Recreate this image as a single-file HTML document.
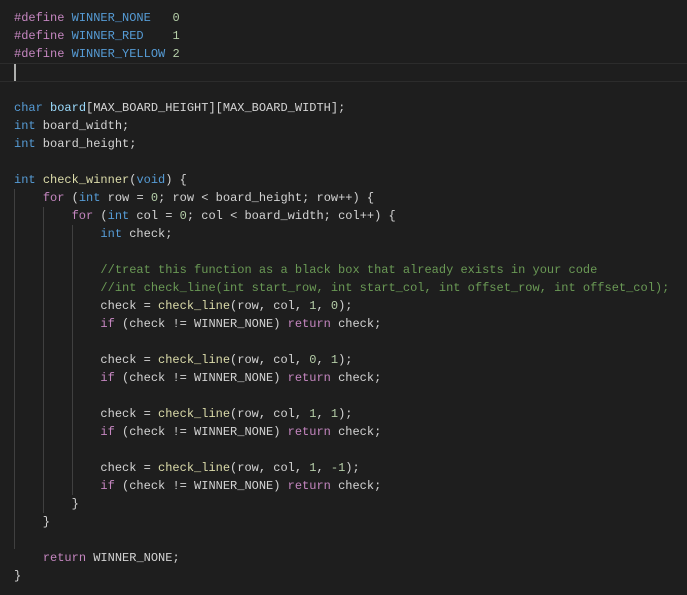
<!DOCTYPE html>
<html><head><style>
html,body{margin:0;padding:0;background:#1e1e1e;width:687px;height:595px;overflow:hidden}
pre{margin:0;position:absolute;left:14px;top:9px;font-family:"Liberation Mono",monospace;font-size:12px;line-height:18px;color:#d4d4d4}
.k{color:#569cd6}.c{color:#c586c0}.m{color:#569cd6}.n{color:#b5cea8}.f{color:#dcdcaa}.v{color:#9cdcfe}.g{color:#6a9955}
.hl{position:absolute;left:0;top:63px;width:687px;height:17px;border-top:1px solid #2c2c2c;border-bottom:1px solid #2c2c2c}
.cur{position:absolute;left:14px;top:64px;width:2px;height:17px;background:#aeafad}
.gd{position:absolute;width:1px;background:#404040}
</style></head><body>
<div class="hl"></div><div class="cur"></div>
<div class="gd" style="left:14px;top:189px;height:360px"></div>
<div class="gd" style="left:43px;top:207px;height:306px"></div>
<div class="gd" style="left:72px;top:225px;height:270px"></div>
<pre><span class="c">#define</span> <span class="m">WINNER_NONE</span>   <span class="n">0</span>
<span class="c">#define</span> <span class="m">WINNER_RED</span>    <span class="n">1</span>
<span class="c">#define</span> <span class="m">WINNER_YELLOW</span> <span class="n">2</span>


<span class="k">char</span> <span class="v">board</span>[MAX_BOARD_HEIGHT][MAX_BOARD_WIDTH];
<span class="k">int</span> board_width;
<span class="k">int</span> board_height;

<span class="k">int</span> <span class="f">check_winner</span>(<span class="k">void</span>) {
    <span class="c">for</span> (<span class="k">int</span> row = <span class="n">0</span>; row &lt; board_height; row++) {
        <span class="c">for</span> (<span class="k">int</span> col = <span class="n">0</span>; col &lt; board_width; col++) {
            <span class="k">int</span> check;

            <span class="g">//treat this function as a black box that already exists in your code</span>
            <span class="g">//int check_line(int start_row, int start_col, int offset_row, int offset_col);</span>
            check = <span class="f">check_line</span>(row, col, <span class="n">1</span>, <span class="n">0</span>);
            <span class="c">if</span> (check != WINNER_NONE) <span class="c">return</span> check;

            check = <span class="f">check_line</span>(row, col, <span class="n">0</span>, <span class="n">1</span>);
            <span class="c">if</span> (check != WINNER_NONE) <span class="c">return</span> check;

            check = <span class="f">check_line</span>(row, col, <span class="n">1</span>, <span class="n">1</span>);
            <span class="c">if</span> (check != WINNER_NONE) <span class="c">return</span> check;

            check = <span class="f">check_line</span>(row, col, <span class="n">1</span>, <span class="n">-1</span>);
            <span class="c">if</span> (check != WINNER_NONE) <span class="c">return</span> check;
        }
    }

    <span class="c">return</span> WINNER_NONE;
}</pre>
</body></html>
